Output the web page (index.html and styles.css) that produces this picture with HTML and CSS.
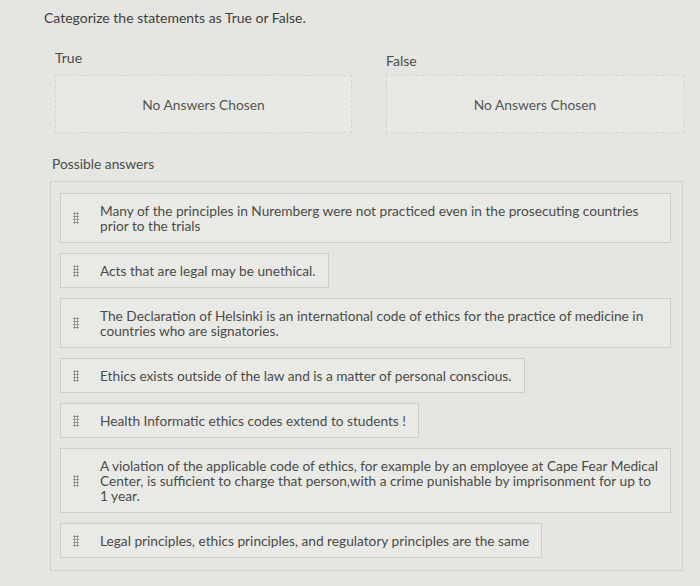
FILE: index.html
```
<html>
    <head>
        <meta charset="utf-8">
        <title>Categorize</title>
        <link rel="stylesheet" href="styles.css">
    </head>
    <body>
        <div class="page">
            <h1 class="prompt">Categorize the statements as True or False.</h1>

            <div class="zones">
                <div class="zone">
                    <div class="zoneLabel">True</div>
                    <div class="dropBox">No Answers Chosen</div>
                </div>
                <div class="zone">
                    <div class="zoneLabel zoneLabelLow">False</div>
                    <div class="dropBox">No Answers Chosen</div>
                </div>
            </div>

            <h2 class="bankTitle">Possible answers</h2>
            <div class="bank">
                <div class="answer"><span class="handle"></span><span class="answerText">Many of the principles in Nuremberg were not practiced even in the prosecuting countries prior to the trials</span></div>
                <div class="answer"><span class="handle"></span><span class="answerText">Acts that are legal may be unethical.</span></div>
                <div class="answer"><span class="handle"></span><span class="answerText">The Declaration of Helsinki is an international code of ethics for the practice of medicine in countries who are signatories.</span></div>
                <div class="answer"><span class="handle"></span><span class="answerText">Ethics exists outside of the law and is a matter of personal conscious.</span></div>
                <div class="answer"><span class="handle"></span><span class="answerText">Health Informatic ethics codes extend to students !</span></div>
                <div class="answer"><span class="handle"></span><span class="answerText">A violation of the applicable code of ethics, for example by an employee at Cape Fear Medical Center, is sufficient to charge that person,with a crime punishable by imprisonment for up to 1 year.</span></div>
                <div class="answer"><span class="handle"></span><span class="answerText">Legal principles, ethics principles, and regulatory principles are the same</span></div>
            </div>
        </div>
    </body>
</html>
```

FILE: styles.css
```
body {
    margin: 0;
    background-color: #e5e6e1;
    font-family: Lato, "Open Sans", sans-serif;
    color: #474846;
}
.page {
    padding-top: 10px;
    padding-left: 44px;
}
.prompt {
    margin: 0;
    font-size: 14px;
    font-weight: normal;
    line-height: 16px;
    color: #3e3f3d;
}
.zones {
    display: grid;
    grid-template-columns: 297px 298px;
    column-gap: 34px;
    margin-top: 24px;
    margin-left: 11px;
}
.zoneLabel {
    font-size: 14px;
    line-height: 16px;
    color: #4a4b49;
}
.zoneLabelLow {
    padding-top: 3px;
    margin-bottom: -3px;
}
.dropBox {
    margin-top: 9px;
    height: 56px;
    border: 1px dashed #d6d7d2;
    background-color: #e8e9e4;
    display: flex;
    align-items: center;
    justify-content: center;
    font-size: 13.8px;
    color: #545553;
}
.bankTitle {
    margin: 23px 0 0 8px;
    font-size: 13.8px;
    font-weight: normal;
    line-height: 16px;
    color: #4a4b49;
}
.bank {
    margin-top: 9px;
    margin-left: 6px;
    width: 612px;
    border: 1px solid #d0d1cc;
    padding: 11px 10px 12px 9px;
    display: flex;
    flex-direction: column;
    align-items: flex-start;
    gap: 10px;
}
.answer {
    display: flex;
    align-items: center;
    max-width: 612px;
    box-sizing: border-box;
    padding: 9px 12px 9px 12px;
    border: 1px solid #cccdc8;
    background-color: #e9eae5;
    font-size: 13.7px;
    line-height: 15px;
    color: #4a4b49;
}
.answerText {
    max-width: 558px;
}
.handle {
    flex: none;
    width: 6px;
    height: 12px;
    margin-right: 21px;
    background-image: radial-gradient(circle, #7d7e7b 0.9px, transparent 1.2px);
    background-size: 3px 3px;
}
```
